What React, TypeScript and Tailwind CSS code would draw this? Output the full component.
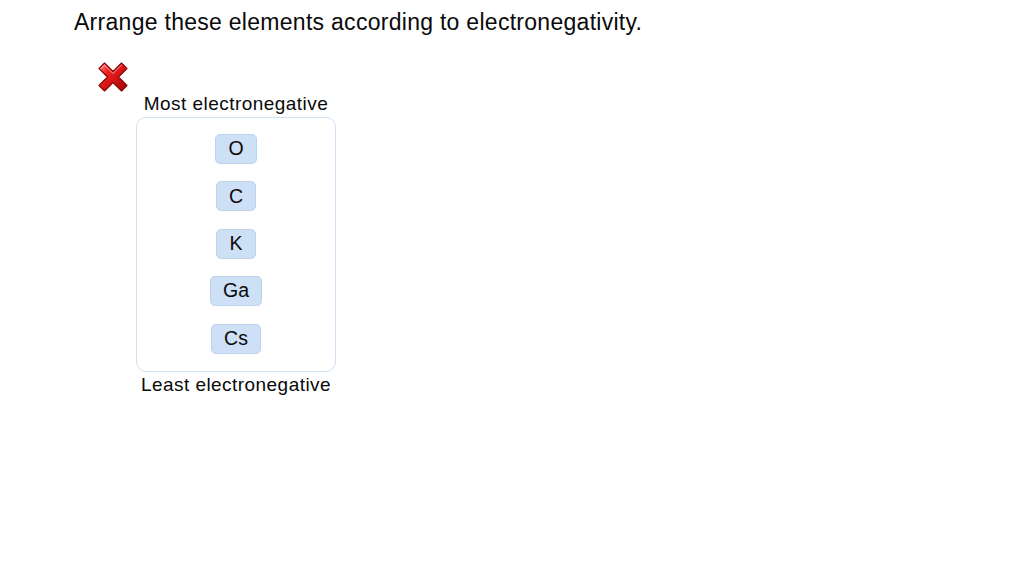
import React from "react";

function RedX() {
  return (
    <svg width="32" height="32" viewBox="0 0 32 32">
      <defs>
        <linearGradient id="xg" x1="0" y1="0" x2="1" y2="1">
          <stop offset="0" stopColor="#ff9a9a" />
          <stop offset="0.3" stopColor="#f22020" />
          <stop offset="1" stopColor="#a00000" />
        </linearGradient>
      </defs>
      <path
        d="M2 7.5 L7.5 2 L16 10.5 L24.5 2 L30 7.5 L21.5 16 L30 24.5 L24.5 30 L16 21.5 L7.5 30 L2 24.5 L10.5 16 Z"
        fill="url(#xg)"
        stroke="#8a0000"
        strokeWidth="1.1"
        strokeLinejoin="round"
      />
      <path d="M4 7.5 L7.5 4 L16 12.5 L24.5 4" fill="none" stroke="#ffd0d0" strokeWidth="1" strokeLinecap="round" strokeLinejoin="round" opacity="0.7" />
    </svg>
  );
}

const items = ["O", "C", "K", "Ga", "Cs"];

export default function App() {
  return (
    <div
      className="w-[1024px] h-[566px] bg-white text-[#0a0a0a] pl-[74px] pt-[8px]"
      style={{ fontFamily: '"Liberation Sans", Arial, sans-serif' }}
    >
      <div className="text-[23px] leading-[28px] tracking-[0.28px]">
        Arrange these elements according to electronegativity.
      </div>
      <div className="ml-[23px] mt-[25px] w-[32px] h-[32px]">
        <RedX />
      </div>
      <div className="ml-[62px] w-[200px] flex flex-col items-center">
        <div className="text-[19px] leading-[22px] tracking-[0.45px] whitespace-nowrap">
          Most electronegative
        </div>
        <div className="mt-[2px] w-[200px] rounded-[10px] border border-[#cfe0f4] pt-[16px] pb-[17px] flex flex-col items-center gap-[17.4px]">
          {items.map((it) => (
            <div
              key={it}
              className="h-[30px] px-[12px] rounded-[5px] bg-[#cde0f6] border border-[#b9d3f0] flex items-center justify-center text-[19.5px] leading-none"
            >
              {it}
            </div>
          ))}
        </div>
        <div className="mt-[2px] text-[19px] leading-[22px] tracking-[0.45px] whitespace-nowrap">
          Least electronegative
        </div>
      </div>
    </div>
  );
}
